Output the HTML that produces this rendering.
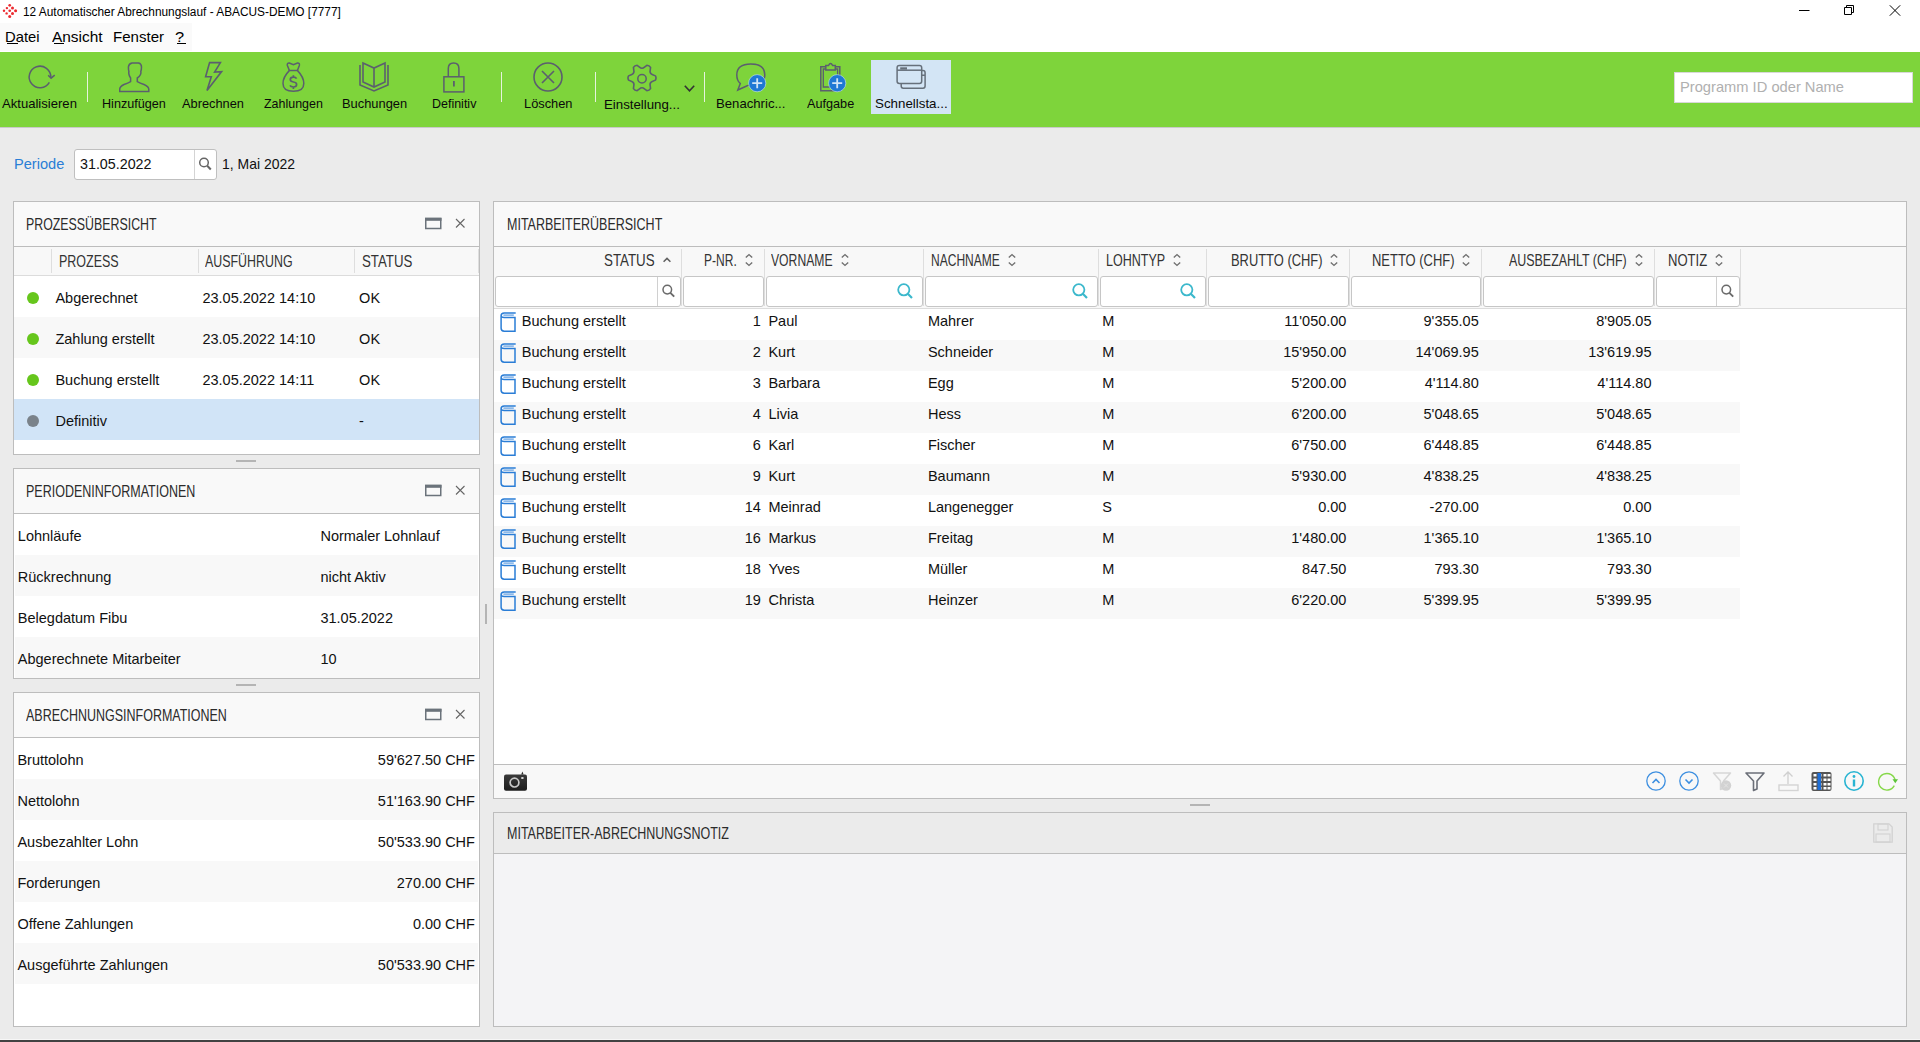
<!DOCTYPE html>
<html><head><meta charset="utf-8"><title>ABACUS</title>
<style>html,body{margin:0;padding:0;width:1920px;height:1042px;overflow:hidden;position:relative;font-family:'Liberation Sans', sans-serif;}</style>
</head><body>
<div style="position:absolute;left:0px;top:0px;width:1920px;height:1042px;background:#ebebeb;"></div>
<div style="position:absolute;left:0px;top:0px;width:1920px;height:23px;background:#ffffff;"></div>
<svg style="position:absolute;left:0px;top:0px;" width="20" height="22" viewBox="0 0 20 22"><circle cx="9.7" cy="5.3" r="1.35" fill="#ec2a30"/><circle cx="6.9" cy="8.1" r="1.2" fill="#ec2a30"/><circle cx="12.5" cy="8.1" r="1.5" fill="#ec2a30"/><circle cx="4" cy="10.75" r="1.2" fill="#ec2a30"/><circle cx="9.7" cy="10.75" r="1.35" fill="#ec2a30"/><circle cx="15.6" cy="10.75" r="1.5" fill="#ec2a30"/><circle cx="6.6" cy="13.4" r="1.2" fill="#ec2a30"/><circle cx="12.5" cy="13.4" r="1.5" fill="#ec2a30"/><circle cx="9.7" cy="16.4" r="1.5" fill="#ec2a30"/></svg>
<svg style="position:absolute;left:1790px;top:0px;" width="120" height="22" viewBox="0 0 120 22"><path d="M9 10.5h10.5" stroke="#000" stroke-width="1"/><path d="M54.5 7.5h7v7h-7z M56.5 7.5v-2h7v7h-2" fill="none" stroke="#000" stroke-width="1"/><path d="M99.8 5.3l10.4 10.4 M110.2 5.3l-10.4 10.4" stroke="#000" stroke-width="1"/></svg>
<div style="position:absolute;left:0px;top:23px;width:1920px;height:29px;background:#ffffff;"></div>
<div style="position:absolute;left:0px;top:23px;width:192px;height:28px;background:#fafafa;"></div>
<div style="position:absolute;left:6.5px;top:43px;width:11px;height:1px;background:#000;"></div>
<div style="position:absolute;left:53.5px;top:43px;width:10px;height:1px;background:#000;"></div>
<div style="position:absolute;left:114.5px;top:43px;width:0px;height:1px;background:#000;"></div>
<div style="position:absolute;left:176.5px;top:43px;width:9px;height:1px;background:#000;"></div>
<div style="position:absolute;left:0px;top:52px;width:1920px;height:75px;background:#7ed43b;"></div>
<div style="position:absolute;left:0px;top:127px;width:1920px;height:1px;background:#c9c9c9;"></div>
<div style="position:absolute;left:87px;top:72px;width:1px;height:30px;background:#e6f3dc;"></div>
<div style="position:absolute;left:501px;top:72px;width:1px;height:30px;background:#e6f3dc;"></div>
<div style="position:absolute;left:595px;top:72px;width:1px;height:30px;background:#e6f3dc;"></div>
<div style="position:absolute;left:704px;top:72px;width:1px;height:30px;background:#e6f3dc;"></div>
<div style="position:absolute;left:871px;top:60px;width:80px;height:54px;background:#d3e5f5;"></div>
<svg style="position:absolute;left:26px;top:61px;" width="32" height="32" viewBox="0 0 32 32"><path d="M23.35 21.4 A10.8 10.8 0 1 1 24.8 16.3" fill="none" stroke="#5b5f6e" stroke-width="1.5"/><path d="M22.2 14.2 L25.1 17.2 L28.7 14.2" fill="none" stroke="#5b5f6e" stroke-width="1.5"/></svg>
<svg style="position:absolute;left:119px;top:62px;" width="31" height="31" viewBox="0 0 31 31"><path d="M13 0.9 L19.6 0.9 Q22.5 1.6 22.5 5 Q22.5 8 21.8 9.5 Q22.2 11 21.5 12.5 Q20.5 14.8 18.3 16 L18.3 19.6 Q21 21 25 22.5 Q29.8 24.5 29.8 27.5 L29.8 29.4 L0.7 29.4 L0.7 27.5 Q0.7 24.5 5 22.5 Q9 21 11.6 19.6 L11.6 16 Q10.3 14 10 12.5 Q9.6 11 9.9 9.5 Q9.4 8 9.4 5 Q9.7 1.6 13 0.9 Z" fill="none" stroke="#5b5f6e" stroke-width="1.5"/></svg>
<svg style="position:absolute;left:203px;top:61px;" width="22" height="32" viewBox="0 0 22 32"><path d="M6.6 1.6 L17.4 1.6 L11.6 11 L18.6 10.6 L4 29.5 L8.3 15.8 L2.6 15.8 Z" fill="none" stroke="#5b5f6e" stroke-width="1.6" stroke-linejoin="miter"/></svg>
<svg style="position:absolute;left:281px;top:61px;" width="25" height="32" viewBox="0 0 25 32"><path d="M8.5 9.8 L6.3 4.2 Q6 1.8 8.3 2 L12.4 3.8 L16.5 2 Q18.8 1.8 18.4 4.2 L16.3 9.8" fill="none" stroke="#5b5f6e" stroke-width="1.5"/><path d="M8.3 9.6 L16.5 9.6 Q22.8 16 22.8 22.5 Q22.8 30.3 12.4 30.3 Q2 30.3 2 22.5 Q2 16 8.3 9.6 Z" fill="none" stroke="#5b5f6e" stroke-width="1.5"/><path d="M15.6 17.6 Q14.8 16.2 12.4 16.2 Q9.3 16.2 9.3 18.6 Q9.3 20.6 12.4 21 Q15.6 21.4 15.6 23.6 Q15.6 26 12.4 26 Q9.6 26 9 24.4 M12.4 14.3 L12.4 16.2 M12.4 26 L12.4 28" fill="none" stroke="#5b5f6e" stroke-width="1.7"/></svg>
<svg style="position:absolute;left:357px;top:61px;" width="34" height="31" viewBox="0 0 34 31"><path d="M3 4 L3 24 L17 30 L31 24 L31 4" fill="none" stroke="#5b5f6e" stroke-width="1.6"/><path d="M6 2 L17 7 L28 2 L28 21 L17 26 L6 21 Z M17 7 L17 26" fill="none" stroke="#5b5f6e" stroke-width="1.6"/></svg>
<svg style="position:absolute;left:442px;top:61px;" width="25" height="32" viewBox="0 0 25 32"><path d="M6.3 15.8 L6.3 7.6 Q6.3 2.1 11.6 2.1 Q16.9 2.1 16.9 7.6 L16.9 15.8" fill="none" stroke="#5b5f6e" stroke-width="1.5"/><rect x="1.9" y="15.8" width="20" height="15.1" fill="none" stroke="#5b5f6e" stroke-width="1.5"/><path d="M11.9 20 L11.9 25.4" stroke="#5b5f6e" stroke-width="1.8"/></svg>
<svg style="position:absolute;left:532px;top:61px;" width="32" height="32" viewBox="0 0 32 32"><circle cx="16" cy="16" r="14" fill="none" stroke="#5b5f6e" stroke-width="1.6"/><path d="M10 10 L22 22 M22 10 L10 22" stroke="#5b5f6e" stroke-width="1.6"/></svg>
<svg style="position:absolute;left:627px;top:62.7px;" width="30" height="30" viewBox="0 0 30 30"><path d="M28.43 12.87 Q29.60 15.00 28.43 17.13 L25.71 18.27 Q22.45 19.30 23.19 22.64 L23.56 25.57 Q22.30 27.64 19.87 27.70 L17.52 25.91 Q15.00 23.60 12.48 25.91 L10.13 27.70 Q7.70 27.64 6.44 25.57 L6.81 22.64 Q7.55 19.30 4.29 18.27 L1.57 17.13 Q0.40 15.00 1.57 12.87 L4.29 11.73 Q7.55 10.70 6.81 7.36 L6.44 4.43 Q7.70 2.36 10.13 2.30 L12.48 4.09 Q15.00 6.40 17.52 4.09 L19.87 2.30 Q22.30 2.36 23.56 4.43 L23.19 7.36 Q22.45 10.70 25.71 11.73 L28.43 12.87Z" fill="none" stroke="#5b5f6e" stroke-width="1.6" stroke-linejoin="round"/><circle cx="15" cy="15.7" r="4.2" fill="none" stroke="#5b5f6e" stroke-width="1.5"/></svg>
<svg style="position:absolute;left:683px;top:83.5px;" width="13" height="10" viewBox="0 0 13 10"><path d="M1.8 1.8 L6.5 6.8 L11.2 1.8" fill="none" stroke="#333" stroke-width="1.6"/></svg>
<svg style="position:absolute;left:735px;top:61px;" width="36" height="34" viewBox="0 0 36 34"><path d="M15.8 3 Q29.8 3 29.8 14 Q29.8 24 16 24 Q13 24 10.5 25.5 L2.8 29 L5.3 22.5 Q1.8 19.5 1.8 14 Q1.8 3 15.8 3 Z" fill="none" stroke="#5b5f6e" stroke-width="1.5"/><circle cx="22.2" cy="22.2" r="8.6" fill="#1f78d4" stroke="#e8f2ff" stroke-width="0.5"/><path d="M17.2 22.2 h10 M22.2 17.2 v10" stroke="#cfe3f7" stroke-width="1.8"/></svg>
<svg style="position:absolute;left:818px;top:60px;" width="30" height="34" viewBox="0 0 30 34"><path d="M7.3 6.8 L2.8 6.8 L2.8 30.8 L21.8 30.8 L21.8 6.8 L17.6 6.8" fill="none" stroke="#5b5f6e" stroke-width="1.5"/><path d="M7.3 9 L5.3 9 L5.3 27 L19.6 27 L19.6 9 L17.6 9" fill="none" stroke="#5b5f6e" stroke-width="1.3"/><path d="M7.8 10 L7.8 5.5 L10.5 5.5 Q12.6 1.5 14.6 5.5 L17.3 5.5 L17.3 10 Z" fill="none" stroke="#5b5f6e" stroke-width="1.5"/><circle cx="19.2" cy="23.2" r="8.6" fill="#1f78d4" stroke="#e8f2ff" stroke-width="0.5"/><path d="M14.2 23.2 h10 M19.2 18.2 v10" stroke="#cfe3f7" stroke-width="1.8"/></svg>
<svg style="position:absolute;left:895px;top:63px;" width="33" height="28" viewBox="0 0 33 28"><rect x="2.1" y="2.5" width="24.6" height="18" rx="2.2" fill="none" stroke="#66707b" stroke-width="1.5"/><path d="M2.1 7.2 L26.7 7.2" stroke="#66707b" stroke-width="1.5"/><rect x="5.2" y="4.3" width="6.8" height="2.3" fill="#66707b"/><path d="M26.7 7.6 L28 7.6 Q30.1 7.6 30.1 9.8 L30.1 23 Q30.1 25.2 28 25.2 L8.3 25.2 Q6.2 25.2 6.2 23 L6.2 20.5 M26.7 12.3 L30.1 12.3" fill="none" stroke="#66707b" stroke-width="1.5"/></svg>
<div style="position:absolute;left:1674px;top:72px;width:237px;height:29px;border:1px solid #d8d8d8;background:#ffffff;"></div>
<div style="position:absolute;left:74px;top:149px;width:141px;height:29px;border:1px solid #bfbfbf;background:#ffffff;border-radius:3px;"></div>
<div style="position:absolute;left:194px;top:150px;width:1px;height:29px;background:#d4d4d4;"></div>
<svg style="position:absolute;left:197px;top:155px;" width="17" height="18" viewBox="0 0 17 18"><circle cx="7" cy="7.5" r="4.3" fill="none" stroke="#666" stroke-width="1.5"/><path d="M10.2 10.7 L13.8 14.5" stroke="#666" stroke-width="2"/></svg>
<div style="position:absolute;left:13px;top:201px;width:465px;height:252px;border:1px solid #bdbdbd;background:#ffffff;"></div>
<div style="position:absolute;left:14px;top:202px;width:465px;height:44px;background:#f9f9f9;"></div>
<div style="position:absolute;left:14px;top:246px;width:465px;height:1px;background:#bdbdbd;"></div>
<svg style="position:absolute;left:425px;top:217px;" width="18" height="13" viewBox="0 0 18 13"><rect x="0.75" y="1.5" width="15" height="10" fill="none" stroke="#6b737b" stroke-width="1.5"/><rect x="0" y="0.8" width="16.5" height="3" fill="#6b737b"/></svg>
<svg style="position:absolute;left:455px;top:218px;" width="12" height="12" viewBox="0 0 12 12"><path d="M1 1 L9.5 9.5 M9.5 1 L1 9.5" stroke="#666" stroke-width="1.1"/></svg>
<div style="position:absolute;left:14px;top:247px;width:465px;height:28px;background:#f8f8f8;"></div>
<div style="position:absolute;left:14px;top:275px;width:465px;height:1px;background:#dcdcdc;"></div>
<div style="position:absolute;left:51px;top:249px;width:1px;height:24px;background:#dedede;"></div>
<div style="position:absolute;left:198px;top:249px;width:1px;height:24px;background:#dedede;"></div>
<div style="position:absolute;left:354px;top:249px;width:1px;height:24px;background:#dedede;"></div>
<div style="position:absolute;left:478px;top:249px;width:1px;height:24px;background:#dedede;"></div>
<svg style="position:absolute;left:26px;top:291px;" width="14" height="14" viewBox="0 0 14 14"><circle cx="7" cy="7" r="6" fill="#66c61c"/></svg>
<div style="position:absolute;left:14px;top:317px;width:465px;height:41px;background:#f8f8f8;"></div>
<svg style="position:absolute;left:26px;top:332px;" width="14" height="14" viewBox="0 0 14 14"><circle cx="7" cy="7" r="6" fill="#66c61c"/></svg>
<svg style="position:absolute;left:26px;top:373px;" width="14" height="14" viewBox="0 0 14 14"><circle cx="7" cy="7" r="6" fill="#66c61c"/></svg>
<div style="position:absolute;left:14px;top:399px;width:465px;height:41px;background:#d1e4f7;"></div>
<svg style="position:absolute;left:26px;top:414px;" width="14" height="14" viewBox="0 0 14 14"><circle cx="7" cy="7" r="6" fill="#7a828a"/></svg>
<div style="position:absolute;left:236px;top:460px;width:20px;height:2px;background:#b4b4b4;"></div>
<div style="position:absolute;left:13px;top:468px;width:465px;height:209px;border:1px solid #bdbdbd;background:#ffffff;"></div>
<div style="position:absolute;left:14px;top:469px;width:465px;height:44px;background:#f9f9f9;"></div>
<div style="position:absolute;left:14px;top:513px;width:465px;height:1px;background:#bdbdbd;"></div>
<svg style="position:absolute;left:425px;top:484px;" width="18" height="13" viewBox="0 0 18 13"><rect x="0.75" y="1.5" width="15" height="10" fill="none" stroke="#6b737b" stroke-width="1.5"/><rect x="0" y="0.8" width="16.5" height="3" fill="#6b737b"/></svg>
<svg style="position:absolute;left:455px;top:485px;" width="12" height="12" viewBox="0 0 12 12"><path d="M1 1 L9.5 9.5 M9.5 1 L1 9.5" stroke="#666" stroke-width="1.1"/></svg>
<div style="position:absolute;left:15px;top:555px;width:463px;height:41px;background:#f8f8f8;"></div>
<div style="position:absolute;left:15px;top:637px;width:463px;height:41px;background:#f8f8f8;"></div>
<div style="position:absolute;left:236px;top:684px;width:20px;height:2px;background:#b4b4b4;"></div>
<div style="position:absolute;left:485px;top:604px;width:2px;height:20px;background:#b4b4b4;"></div>
<div style="position:absolute;left:13px;top:692px;width:465px;height:333px;border:1px solid #bdbdbd;background:#ffffff;"></div>
<div style="position:absolute;left:14px;top:693px;width:465px;height:44px;background:#f9f9f9;"></div>
<div style="position:absolute;left:14px;top:737px;width:465px;height:1px;background:#bdbdbd;"></div>
<svg style="position:absolute;left:425px;top:708px;" width="18" height="13" viewBox="0 0 18 13"><rect x="0.75" y="1.5" width="15" height="10" fill="none" stroke="#6b737b" stroke-width="1.5"/><rect x="0" y="0.8" width="16.5" height="3" fill="#6b737b"/></svg>
<svg style="position:absolute;left:455px;top:709px;" width="12" height="12" viewBox="0 0 12 12"><path d="M1 1 L9.5 9.5 M9.5 1 L1 9.5" stroke="#666" stroke-width="1.1"/></svg>
<div style="position:absolute;left:15px;top:779px;width:463px;height:41px;background:#f8f8f8;"></div>
<div style="position:absolute;left:15px;top:861px;width:463px;height:41px;background:#f8f8f8;"></div>
<div style="position:absolute;left:15px;top:943px;width:463px;height:41px;background:#f8f8f8;"></div>
<div style="position:absolute;left:493px;top:201px;width:1412px;height:596px;border:1px solid #bdbdbd;background:#ffffff;"></div>
<div style="position:absolute;left:494px;top:202px;width:1412px;height:44px;background:#f9f9f9;"></div>
<div style="position:absolute;left:494px;top:246px;width:1412px;height:1px;background:#bdbdbd;"></div>
<div style="position:absolute;left:494px;top:247px;width:1412px;height:61px;background:#f8f8f8;"></div>
<div style="position:absolute;left:494px;top:308px;width:1412px;height:1px;background:#dcdcdc;"></div>
<div style="position:absolute;left:681px;top:249px;width:1px;height:57px;background:#dedede;"></div>
<div style="position:absolute;left:764px;top:249px;width:1px;height:57px;background:#dedede;"></div>
<div style="position:absolute;left:923px;top:249px;width:1px;height:57px;background:#dedede;"></div>
<div style="position:absolute;left:1098px;top:249px;width:1px;height:57px;background:#dedede;"></div>
<div style="position:absolute;left:1206px;top:249px;width:1px;height:57px;background:#dedede;"></div>
<div style="position:absolute;left:1349px;top:249px;width:1px;height:57px;background:#dedede;"></div>
<div style="position:absolute;left:1481px;top:249px;width:1px;height:57px;background:#dedede;"></div>
<div style="position:absolute;left:1654px;top:249px;width:1px;height:57px;background:#dedede;"></div>
<div style="position:absolute;left:1740px;top:249px;width:1px;height:57px;background:#dedede;"></div>
<div style="position:absolute;left:495px;top:276px;width:184px;height:29px;border:1px solid #c6c6c6;background:#ffffff;border-radius:3px;"></div>
<div style="position:absolute;left:683px;top:276px;width:79px;height:29px;border:1px solid #c6c6c6;background:#ffffff;border-radius:3px;"></div>
<div style="position:absolute;left:766px;top:276px;width:155px;height:29px;border:1px solid #c6c6c6;background:#ffffff;border-radius:3px;"></div>
<div style="position:absolute;left:925px;top:276px;width:171px;height:29px;border:1px solid #c6c6c6;background:#ffffff;border-radius:3px;"></div>
<div style="position:absolute;left:1100px;top:276px;width:104px;height:29px;border:1px solid #c6c6c6;background:#ffffff;border-radius:3px;"></div>
<div style="position:absolute;left:1208px;top:276px;width:139px;height:29px;border:1px solid #c6c6c6;background:#ffffff;border-radius:3px;"></div>
<div style="position:absolute;left:1351px;top:276px;width:128px;height:29px;border:1px solid #c6c6c6;background:#ffffff;border-radius:3px;"></div>
<div style="position:absolute;left:1483px;top:276px;width:169px;height:29px;border:1px solid #c6c6c6;background:#ffffff;border-radius:3px;"></div>
<div style="position:absolute;left:1656px;top:276px;width:82px;height:29px;border:1px solid #c6c6c6;background:#ffffff;border-radius:3px;"></div>
<div style="position:absolute;left:657px;top:277px;width:1px;height:29px;background:#d0d0d0;"></div>
<div style="position:absolute;left:1716px;top:277px;width:1px;height:29px;background:#d0d0d0;"></div>
<svg style="position:absolute;left:661px;top:283px;" width="16" height="16" viewBox="0 0 16 16"><circle cx="6.3" cy="6.6" r="4.3" fill="none" stroke="#6a6a6a" stroke-width="1.5"/><path d="M9.4 9.8 L13.2 13.6" stroke="#6a6a6a" stroke-width="1.9"/></svg>
<svg style="position:absolute;left:1720px;top:283px;" width="16" height="16" viewBox="0 0 16 16"><circle cx="6.3" cy="6.6" r="4.3" fill="none" stroke="#6a6a6a" stroke-width="1.5"/><path d="M9.4 9.8 L13.2 13.6" stroke="#6a6a6a" stroke-width="1.9"/></svg>
<svg style="position:absolute;left:897px;top:283px;" width="17" height="17" viewBox="0 0 17 17"><circle cx="6.8" cy="6.8" r="5.6" fill="none" stroke="#3bb8cc" stroke-width="1.8"/><path d="M10.8 10.8 L15 15" stroke="#3bb8cc" stroke-width="2.2"/></svg>
<svg style="position:absolute;left:1072px;top:283px;" width="17" height="17" viewBox="0 0 17 17"><circle cx="6.8" cy="6.8" r="5.6" fill="none" stroke="#3bb8cc" stroke-width="1.8"/><path d="M10.8 10.8 L15 15" stroke="#3bb8cc" stroke-width="2.2"/></svg>
<svg style="position:absolute;left:1180px;top:283px;" width="17" height="17" viewBox="0 0 17 17"><circle cx="6.8" cy="6.8" r="5.6" fill="none" stroke="#3bb8cc" stroke-width="1.8"/><path d="M10.8 10.8 L15 15" stroke="#3bb8cc" stroke-width="2.2"/></svg>
<svg style="position:absolute;left:662px;top:256px;" width="10" height="8" viewBox="0 0 10 8"><path d="M1.6 5.8 L5 2.4 L8.4 5.8" fill="none" stroke="#606060" stroke-width="1.5"/></svg>
<svg style="position:absolute;left:744px;top:253px;" width="10" height="14" viewBox="0 0 10 14"><path d="M1.8 4.6 L5 1.6 L8.2 4.6 M1.8 9.4 L5 12.4 L8.2 9.4" fill="none" stroke="#707070" stroke-width="1.4"/></svg>
<svg style="position:absolute;left:840.3px;top:253px;" width="10" height="14" viewBox="0 0 10 14"><path d="M1.8 4.6 L5 1.6 L8.2 4.6 M1.8 9.4 L5 12.4 L8.2 9.4" fill="none" stroke="#707070" stroke-width="1.4"/></svg>
<svg style="position:absolute;left:1007.4px;top:253px;" width="10" height="14" viewBox="0 0 10 14"><path d="M1.8 4.6 L5 1.6 L8.2 4.6 M1.8 9.4 L5 12.4 L8.2 9.4" fill="none" stroke="#707070" stroke-width="1.4"/></svg>
<svg style="position:absolute;left:1172px;top:253px;" width="10" height="14" viewBox="0 0 10 14"><path d="M1.8 4.6 L5 1.6 L8.2 4.6 M1.8 9.4 L5 12.4 L8.2 9.4" fill="none" stroke="#707070" stroke-width="1.4"/></svg>
<svg style="position:absolute;left:1329px;top:253px;" width="10" height="14" viewBox="0 0 10 14"><path d="M1.8 4.6 L5 1.6 L8.2 4.6 M1.8 9.4 L5 12.4 L8.2 9.4" fill="none" stroke="#707070" stroke-width="1.4"/></svg>
<svg style="position:absolute;left:1461px;top:253px;" width="10" height="14" viewBox="0 0 10 14"><path d="M1.8 4.6 L5 1.6 L8.2 4.6 M1.8 9.4 L5 12.4 L8.2 9.4" fill="none" stroke="#707070" stroke-width="1.4"/></svg>
<svg style="position:absolute;left:1634.3px;top:253px;" width="10" height="14" viewBox="0 0 10 14"><path d="M1.8 4.6 L5 1.6 L8.2 4.6 M1.8 9.4 L5 12.4 L8.2 9.4" fill="none" stroke="#707070" stroke-width="1.4"/></svg>
<svg style="position:absolute;left:1714px;top:253px;" width="10" height="14" viewBox="0 0 10 14"><path d="M1.8 4.6 L5 1.6 L8.2 4.6 M1.8 9.4 L5 12.4 L8.2 9.4" fill="none" stroke="#707070" stroke-width="1.4"/></svg>
<svg style="position:absolute;left:500px;top:312px;" width="16" height="20" viewBox="0 0 16 20"><path d="M15.7 0.9 L4.2 0.9 Q1.1 0.9 1.1 3.8 L1.1 16.3 Q1.1 19.2 4.2 19.2 L15 19.2 L15 5.4 L4.2 5.4 Q1.1 5.4 1.1 3.8" fill="none" stroke="#2a7dd6" stroke-width="1.5"/><path d="M3.4 3.1 L13.8 3.1" stroke="#6aa4e4" stroke-width="1.3"/></svg>
<div style="position:absolute;left:494px;top:340px;width:1246px;height:31px;background:#f8f8f8;"></div>
<svg style="position:absolute;left:500px;top:343px;" width="16" height="20" viewBox="0 0 16 20"><path d="M15.7 0.9 L4.2 0.9 Q1.1 0.9 1.1 3.8 L1.1 16.3 Q1.1 19.2 4.2 19.2 L15 19.2 L15 5.4 L4.2 5.4 Q1.1 5.4 1.1 3.8" fill="none" stroke="#2a7dd6" stroke-width="1.5"/><path d="M3.4 3.1 L13.8 3.1" stroke="#6aa4e4" stroke-width="1.3"/></svg>
<svg style="position:absolute;left:500px;top:374px;" width="16" height="20" viewBox="0 0 16 20"><path d="M15.7 0.9 L4.2 0.9 Q1.1 0.9 1.1 3.8 L1.1 16.3 Q1.1 19.2 4.2 19.2 L15 19.2 L15 5.4 L4.2 5.4 Q1.1 5.4 1.1 3.8" fill="none" stroke="#2a7dd6" stroke-width="1.5"/><path d="M3.4 3.1 L13.8 3.1" stroke="#6aa4e4" stroke-width="1.3"/></svg>
<div style="position:absolute;left:494px;top:402px;width:1246px;height:31px;background:#f8f8f8;"></div>
<svg style="position:absolute;left:500px;top:405px;" width="16" height="20" viewBox="0 0 16 20"><path d="M15.7 0.9 L4.2 0.9 Q1.1 0.9 1.1 3.8 L1.1 16.3 Q1.1 19.2 4.2 19.2 L15 19.2 L15 5.4 L4.2 5.4 Q1.1 5.4 1.1 3.8" fill="none" stroke="#2a7dd6" stroke-width="1.5"/><path d="M3.4 3.1 L13.8 3.1" stroke="#6aa4e4" stroke-width="1.3"/></svg>
<svg style="position:absolute;left:500px;top:436px;" width="16" height="20" viewBox="0 0 16 20"><path d="M15.7 0.9 L4.2 0.9 Q1.1 0.9 1.1 3.8 L1.1 16.3 Q1.1 19.2 4.2 19.2 L15 19.2 L15 5.4 L4.2 5.4 Q1.1 5.4 1.1 3.8" fill="none" stroke="#2a7dd6" stroke-width="1.5"/><path d="M3.4 3.1 L13.8 3.1" stroke="#6aa4e4" stroke-width="1.3"/></svg>
<div style="position:absolute;left:494px;top:464px;width:1246px;height:31px;background:#f8f8f8;"></div>
<svg style="position:absolute;left:500px;top:467px;" width="16" height="20" viewBox="0 0 16 20"><path d="M15.7 0.9 L4.2 0.9 Q1.1 0.9 1.1 3.8 L1.1 16.3 Q1.1 19.2 4.2 19.2 L15 19.2 L15 5.4 L4.2 5.4 Q1.1 5.4 1.1 3.8" fill="none" stroke="#2a7dd6" stroke-width="1.5"/><path d="M3.4 3.1 L13.8 3.1" stroke="#6aa4e4" stroke-width="1.3"/></svg>
<svg style="position:absolute;left:500px;top:498px;" width="16" height="20" viewBox="0 0 16 20"><path d="M15.7 0.9 L4.2 0.9 Q1.1 0.9 1.1 3.8 L1.1 16.3 Q1.1 19.2 4.2 19.2 L15 19.2 L15 5.4 L4.2 5.4 Q1.1 5.4 1.1 3.8" fill="none" stroke="#2a7dd6" stroke-width="1.5"/><path d="M3.4 3.1 L13.8 3.1" stroke="#6aa4e4" stroke-width="1.3"/></svg>
<div style="position:absolute;left:494px;top:526px;width:1246px;height:31px;background:#f8f8f8;"></div>
<svg style="position:absolute;left:500px;top:529px;" width="16" height="20" viewBox="0 0 16 20"><path d="M15.7 0.9 L4.2 0.9 Q1.1 0.9 1.1 3.8 L1.1 16.3 Q1.1 19.2 4.2 19.2 L15 19.2 L15 5.4 L4.2 5.4 Q1.1 5.4 1.1 3.8" fill="none" stroke="#2a7dd6" stroke-width="1.5"/><path d="M3.4 3.1 L13.8 3.1" stroke="#6aa4e4" stroke-width="1.3"/></svg>
<svg style="position:absolute;left:500px;top:560px;" width="16" height="20" viewBox="0 0 16 20"><path d="M15.7 0.9 L4.2 0.9 Q1.1 0.9 1.1 3.8 L1.1 16.3 Q1.1 19.2 4.2 19.2 L15 19.2 L15 5.4 L4.2 5.4 Q1.1 5.4 1.1 3.8" fill="none" stroke="#2a7dd6" stroke-width="1.5"/><path d="M3.4 3.1 L13.8 3.1" stroke="#6aa4e4" stroke-width="1.3"/></svg>
<div style="position:absolute;left:494px;top:588px;width:1246px;height:31px;background:#f8f8f8;"></div>
<svg style="position:absolute;left:500px;top:591px;" width="16" height="20" viewBox="0 0 16 20"><path d="M15.7 0.9 L4.2 0.9 Q1.1 0.9 1.1 3.8 L1.1 16.3 Q1.1 19.2 4.2 19.2 L15 19.2 L15 5.4 L4.2 5.4 Q1.1 5.4 1.1 3.8" fill="none" stroke="#2a7dd6" stroke-width="1.5"/><path d="M3.4 3.1 L13.8 3.1" stroke="#6aa4e4" stroke-width="1.3"/></svg>
<div style="position:absolute;left:494px;top:764px;width:1412px;height:1px;background:#bdbdbd;"></div>
<div style="position:absolute;left:494px;top:765px;width:1412px;height:33px;background:#f8f8f8;"></div>
<svg style="position:absolute;left:503px;top:770px;" width="26" height="23" viewBox="0 0 26 23"><defs><linearGradient id="cg" x1="0" y1="0" x2="0" y2="1"><stop offset="0" stop-color="#3a3a3a"/><stop offset="1" stop-color="#1c1c1c"/></linearGradient></defs><rect x="1" y="4.5" width="23" height="16.3" rx="2" fill="url(#cg)"/><path d="M18.2 4.6 L19.4 1.6 L20.6 4.6Z" fill="#2b2b2b"/><circle cx="11.5" cy="12.6" r="4.4" fill="none" stroke="#c8c8c8" stroke-width="1.7"/><ellipse cx="19.4" cy="8.1" rx="1.4" ry="1" fill="#ddd"/></svg>
<svg style="position:absolute;left:1645.5px;top:771px;" width="21" height="21" viewBox="0 0 21 21"><circle cx="10" cy="10" r="9.2" fill="none" stroke="#3d8fe0" stroke-width="1.3"/><path d="M6.5 12 L10 8.5 L13.5 12" fill="none" stroke="#3d8fe0" stroke-width="1.6"/></svg>
<svg style="position:absolute;left:1678.5px;top:771px;" width="21" height="21" viewBox="0 0 21 21"><circle cx="10" cy="10" r="9.2" fill="none" stroke="#3d8fe0" stroke-width="1.3"/><path d="M6.5 8.5 L10 12 L13.5 8.5" fill="none" stroke="#3d8fe0" stroke-width="1.6"/></svg>
<svg style="position:absolute;left:1712px;top:771px;" width="21" height="21" viewBox="0 0 21 21"><path d="M1.5 2 L18.5 2 L11.5 10 L11.5 17 L8.5 18.5 L8.5 10 Z" fill="none" stroke="#d6d6d6" stroke-width="1.5" stroke-linejoin="round"/><circle cx="14" cy="14.5" r="5.2" fill="#d2d2d2"/><path d="M12 12.5 L16 16.5 M16 12.5 L12 16.5" stroke="#e4e4e4" stroke-width="1"/></svg>
<svg style="position:absolute;left:1745px;top:771px;" width="21" height="21" viewBox="0 0 21 21"><path d="M1 2 L19 2 L12 10 L12 18 L8.5 19.5 L8.5 10 Z" fill="none" stroke="#6b6f78" stroke-width="1.6" stroke-linejoin="round"/></svg>
<svg style="position:absolute;left:1778px;top:771px;" width="21" height="21" viewBox="0 0 21 21"><path d="M10 1 L10 13 M5.5 5.5 L10 1 L14.5 5.5" fill="none" stroke="#cfcfcf" stroke-width="1.3"/><rect x="1" y="14" width="19" height="5.5" fill="none" stroke="#d4d4d4" stroke-width="1.4"/></svg>
<svg style="position:absolute;left:1810.5px;top:771px;" width="21" height="21" viewBox="0 0 21 21"><rect x="0.5" y="1" width="20" height="19" rx="2" fill="#555"/><rect x="2.5" y="3" width="3" height="2.5" fill="#fff"/><rect x="2.5" y="7.5" width="3" height="2.5" fill="#fff"/><rect x="2.5" y="12" width="3" height="2.5" fill="#fff"/><rect x="2.5" y="16" width="3" height="2.5" fill="#fff"/><rect x="7.5" y="3" width="3" height="2.5" fill="#fff"/><rect x="7.5" y="7.5" width="3" height="2.5" fill="#fff"/><rect x="7.5" y="12" width="3" height="2.5" fill="#fff"/><rect x="7.5" y="16" width="3" height="2.5" fill="#fff"/><rect x="12.5" y="3" width="3" height="2.5" fill="#fff"/><rect x="12.5" y="7.5" width="3" height="2.5" fill="#fff"/><rect x="12.5" y="12" width="3" height="2.5" fill="#fff"/><rect x="12.5" y="16" width="3" height="2.5" fill="#fff"/><rect x="16.5" y="3" width="3" height="2.5" fill="#fff"/><rect x="16.5" y="7.5" width="3" height="2.5" fill="#fff"/><rect x="16.5" y="12" width="3" height="2.5" fill="#fff"/><rect x="16.5" y="16" width="3" height="2.5" fill="#fff"/><rect x="6.5" y="2" width="3.5" height="17" fill="#1e6fd8"/></svg>
<svg style="position:absolute;left:1843.5px;top:771px;" width="21" height="21" viewBox="0 0 21 21"><circle cx="10" cy="10" r="9.2" fill="none" stroke="#28b4d2" stroke-width="1.6"/><circle cx="10" cy="5.5" r="1.4" fill="#28b4d2"/><path d="M10 8.5 L10 15.5" stroke="#28b4d2" stroke-width="2.4"/></svg>
<svg style="position:absolute;left:1877px;top:771px;" width="22" height="21" viewBox="0 0 22 21"><path d="M17.3 14.6 A8.3 8.3 0 1 1 18.2 10.2" fill="none" stroke="#86d84a" stroke-width="1.4"/><path d="M15.5 8.2 L18.3 12.3 L21 8.2 Z" fill="#5cc43a"/></svg>
<div style="position:absolute;left:1190px;top:804px;width:20px;height:2px;background:#b4b4b4;"></div>
<div style="position:absolute;left:493px;top:812px;width:1412px;height:213px;border:1px solid #bdbdbd;background:#f4f4f6;"></div>
<div style="position:absolute;left:494px;top:813px;width:1412px;height:40px;background:#ebebeb;"></div>
<div style="position:absolute;left:494px;top:853px;width:1412px;height:1px;background:#bdbdbd;"></div>
<svg style="position:absolute;left:1873px;top:823px;" width="20" height="20" viewBox="0 0 20 20"><path d="M0.8 0.8 L16 0.8 L19.2 4 L19.2 19.2 L0.8 19.2 Z" fill="none" stroke="#d2d2d2" stroke-width="1.3"/><rect x="5" y="1" width="10" height="6" fill="none" stroke="#d2d2d2" stroke-width="1.1"/><rect x="3" y="11" width="14" height="8" fill="none" stroke="#d2d2d2" stroke-width="1.1"/></svg>
<div style="position:absolute;left:0px;top:1039px;width:1920px;height:1px;background:#f7f7f7;"></div>
<div style="position:absolute;left:0px;top:1040px;width:1920px;height:2px;background:#424242;"></div>
<div style="position:absolute;left:22.52px;top:5.84px;font:normal 12px/12px 'Liberation Sans', sans-serif;color:#000;white-space:pre;transform:scaleX(0.9886);transform-origin:left top;">12 Automatischer Abrechnungslauf - ABACUS-DEMO [7777]</div>
<div style="position:absolute;left:5.42px;top:29.72px;font:normal 14.5px/14.5px 'Liberation Sans', sans-serif;color:#000;white-space:pre;transform:scaleX(1.0200);transform-origin:left top;">Datei</div>
<div style="position:absolute;left:52.42px;top:29.72px;font:normal 14.5px/14.5px 'Liberation Sans', sans-serif;color:#000;white-space:pre;transform:scaleX(1.0634);transform-origin:left top;">Ansicht</div>
<div style="position:absolute;left:113.42px;top:29.72px;font:normal 14.5px/14.5px 'Liberation Sans', sans-serif;color:#000;white-space:pre;transform:scaleX(1.0383);transform-origin:left top;">Fenster</div>
<div style="position:absolute;left:175.42px;top:29.72px;font:normal 14.5px/14.5px 'Liberation Sans', sans-serif;color:#000;white-space:pre;transform:scaleX(1.1326);transform-origin:left top;">?</div>
<div style="position:absolute;left:2.49px;top:98.16px;font:normal 12.8px/12.8px 'Liberation Sans', sans-serif;color:#0a0a0a;white-space:pre;transform:scaleX(1.0225);transform-origin:left top;">Aktualisieren</div>
<div style="position:absolute;left:101.99px;top:98.16px;font:normal 12.8px/12.8px 'Liberation Sans', sans-serif;color:#0a0a0a;white-space:pre;transform:scaleX(0.9851);transform-origin:left top;">Hinzufügen</div>
<div style="position:absolute;left:182.49px;top:98.16px;font:normal 12.8px/12.8px 'Liberation Sans', sans-serif;color:#0a0a0a;white-space:pre;transform:scaleX(0.9998);transform-origin:left top;">Abrechnen</div>
<div style="position:absolute;left:264.49px;top:98.16px;font:normal 12.8px/12.8px 'Liberation Sans', sans-serif;color:#0a0a0a;white-space:pre;transform:scaleX(0.9733);transform-origin:left top;">Zahlungen</div>
<div style="position:absolute;left:341.89px;top:98.16px;font:normal 12.8px/12.8px 'Liberation Sans', sans-serif;color:#0a0a0a;white-space:pre;transform:scaleX(1.0052);transform-origin:left top;">Buchungen</div>
<div style="position:absolute;left:431.99px;top:98.16px;font:normal 12.8px/12.8px 'Liberation Sans', sans-serif;color:#0a0a0a;white-space:pre;transform:scaleX(0.9749);transform-origin:left top;">Definitiv</div>
<div style="position:absolute;left:523.89px;top:98.16px;font:normal 12.8px/12.8px 'Liberation Sans', sans-serif;color:#0a0a0a;white-space:pre;transform:scaleX(1.0022);transform-origin:left top;">Löschen</div>
<div style="position:absolute;left:603.89px;top:99.16px;font:normal 12.8px/12.8px 'Liberation Sans', sans-serif;color:#0a0a0a;white-space:pre;transform:scaleX(1.0361);transform-origin:left top;">Einstellung...</div>
<div style="position:absolute;left:715.99px;top:98.16px;font:normal 12.8px/12.8px 'Liberation Sans', sans-serif;color:#0a0a0a;white-space:pre;transform:scaleX(1.0273);transform-origin:left top;">Benachric...</div>
<div style="position:absolute;left:807.49px;top:98.16px;font:normal 12.8px/12.8px 'Liberation Sans', sans-serif;color:#0a0a0a;white-space:pre;transform:scaleX(0.9895);transform-origin:left top;">Aufgabe</div>
<div style="position:absolute;left:874.79px;top:98.16px;font:normal 12.8px/12.8px 'Liberation Sans', sans-serif;color:#0a0a0a;white-space:pre;transform:scaleX(1.0418);transform-origin:left top;">Schnellsta...</div>
<div style="position:absolute;left:1679.92px;top:79.52px;font:normal 14.5px/14.5px 'Liberation Sans', sans-serif;color:#b0b0b0;white-space:pre;transform:scaleX(1.0127);transform-origin:left top;">Programm ID oder Name</div>
<div style="position:absolute;left:14.12px;top:157.22px;font:normal 14.5px/14.5px 'Liberation Sans', sans-serif;color:#2a7ed6;white-space:pre;transform:scaleX(1.0068);transform-origin:left top;">Periode</div>
<div style="position:absolute;left:79.92px;top:157.22px;font:normal 14.5px/14.5px 'Liberation Sans', sans-serif;color:#111;white-space:pre;transform:scaleX(0.9851);transform-origin:left top;">31.05.2022</div>
<div style="position:absolute;left:222.42px;top:157.22px;font:normal 14.5px/14.5px 'Liberation Sans', sans-serif;color:#111;white-space:pre;transform:scaleX(0.9630);transform-origin:left top;">1, Mai 2022</div>
<div style="position:absolute;left:26.37px;top:216.51px;font:normal 15.7px/15.7px 'Liberation Sans', sans-serif;color:#2b2b2b;white-space:pre;transform:scaleX(0.7883);transform-origin:left top;">PROZESSÜBERSICHT</div>
<div style="position:absolute;left:58.67px;top:253.71px;font:normal 15.7px/15.7px 'Liberation Sans', sans-serif;color:#333;white-space:pre;transform:scaleX(0.7960);transform-origin:left top;">PROZESS</div>
<div style="position:absolute;left:205.17px;top:253.71px;font:normal 15.7px/15.7px 'Liberation Sans', sans-serif;color:#333;white-space:pre;transform:scaleX(0.7911);transform-origin:left top;">AUSFÜHRUNG</div>
<div style="position:absolute;left:361.67px;top:253.71px;font:normal 15.7px/15.7px 'Liberation Sans', sans-serif;color:#333;white-space:pre;transform:scaleX(0.8450);transform-origin:left top;">STATUS</div>
<div style="position:absolute;left:55.42px;top:290.72px;font:normal 14.5px/14.5px 'Liberation Sans', sans-serif;color:#111;white-space:pre;">Abgerechnet</div>
<div style="position:absolute;left:202.42px;top:290.72px;font:normal 14.5px/14.5px 'Liberation Sans', sans-serif;color:#111;white-space:pre;">23.05.2022 14:10</div>
<div style="position:absolute;left:359.12px;top:290.72px;font:normal 14.5px/14.5px 'Liberation Sans', sans-serif;color:#111;white-space:pre;">OK</div>
<div style="position:absolute;left:55.42px;top:331.72px;font:normal 14.5px/14.5px 'Liberation Sans', sans-serif;color:#111;white-space:pre;">Zahlung erstellt</div>
<div style="position:absolute;left:202.42px;top:331.72px;font:normal 14.5px/14.5px 'Liberation Sans', sans-serif;color:#111;white-space:pre;">23.05.2022 14:10</div>
<div style="position:absolute;left:359.12px;top:331.72px;font:normal 14.5px/14.5px 'Liberation Sans', sans-serif;color:#111;white-space:pre;">OK</div>
<div style="position:absolute;left:55.42px;top:372.72px;font:normal 14.5px/14.5px 'Liberation Sans', sans-serif;color:#111;white-space:pre;">Buchung erstellt</div>
<div style="position:absolute;left:202.42px;top:372.72px;font:normal 14.5px/14.5px 'Liberation Sans', sans-serif;color:#111;white-space:pre;">23.05.2022 14:11</div>
<div style="position:absolute;left:359.12px;top:372.72px;font:normal 14.5px/14.5px 'Liberation Sans', sans-serif;color:#111;white-space:pre;">OK</div>
<div style="position:absolute;left:55.42px;top:413.72px;font:normal 14.5px/14.5px 'Liberation Sans', sans-serif;color:#111;white-space:pre;">Definitiv</div>
<div style="position:absolute;left:359.12px;top:413.72px;font:normal 14.5px/14.5px 'Liberation Sans', sans-serif;color:#111;white-space:pre;">-</div>
<div style="position:absolute;left:26.17px;top:483.51px;font:normal 15.7px/15.7px 'Liberation Sans', sans-serif;color:#2b2b2b;white-space:pre;transform:scaleX(0.7975);transform-origin:left top;">PERIODENINFORMATIONEN</div>
<div style="position:absolute;left:17.82px;top:528.72px;font:normal 14.5px/14.5px 'Liberation Sans', sans-serif;color:#111;white-space:pre;">Lohnläufe</div>
<div style="position:absolute;left:320.42px;top:528.72px;font:normal 14.5px/14.5px 'Liberation Sans', sans-serif;color:#111;white-space:pre;">Normaler Lohnlauf</div>
<div style="position:absolute;left:17.82px;top:569.72px;font:normal 14.5px/14.5px 'Liberation Sans', sans-serif;color:#111;white-space:pre;">Rückrechnung</div>
<div style="position:absolute;left:320.42px;top:569.72px;font:normal 14.5px/14.5px 'Liberation Sans', sans-serif;color:#111;white-space:pre;">nicht Aktiv</div>
<div style="position:absolute;left:17.82px;top:610.72px;font:normal 14.5px/14.5px 'Liberation Sans', sans-serif;color:#111;white-space:pre;">Belegdatum Fibu</div>
<div style="position:absolute;left:320.42px;top:610.72px;font:normal 14.5px/14.5px 'Liberation Sans', sans-serif;color:#111;white-space:pre;">31.05.2022</div>
<div style="position:absolute;left:17.82px;top:651.72px;font:normal 14.5px/14.5px 'Liberation Sans', sans-serif;color:#111;white-space:pre;">Abgerechnete Mitarbeiter</div>
<div style="position:absolute;left:320.42px;top:651.72px;font:normal 14.5px/14.5px 'Liberation Sans', sans-serif;color:#111;white-space:pre;">10</div>
<div style="position:absolute;left:25.77px;top:707.51px;font:normal 15.7px/15.7px 'Liberation Sans', sans-serif;color:#2b2b2b;white-space:pre;transform:scaleX(0.7956);transform-origin:left top;">ABRECHNUNGSINFORMATIONEN</div>
<div style="position:absolute;left:17.42px;top:752.72px;font:normal 14.5px/14.5px 'Liberation Sans', sans-serif;color:#111;white-space:pre;">Bruttolohn</div>
<div style="position:absolute;right:1445.07px;top:752.72px;font:normal 14.5px/14.5px 'Liberation Sans', sans-serif;color:#111;white-space:pre;">59'627.50 CHF</div>
<div style="position:absolute;left:17.42px;top:793.72px;font:normal 14.5px/14.5px 'Liberation Sans', sans-serif;color:#111;white-space:pre;">Nettolohn</div>
<div style="position:absolute;right:1445.07px;top:793.72px;font:normal 14.5px/14.5px 'Liberation Sans', sans-serif;color:#111;white-space:pre;">51'163.90 CHF</div>
<div style="position:absolute;left:17.42px;top:834.72px;font:normal 14.5px/14.5px 'Liberation Sans', sans-serif;color:#111;white-space:pre;">Ausbezahlter Lohn</div>
<div style="position:absolute;right:1445.07px;top:834.72px;font:normal 14.5px/14.5px 'Liberation Sans', sans-serif;color:#111;white-space:pre;">50'533.90 CHF</div>
<div style="position:absolute;left:17.42px;top:875.72px;font:normal 14.5px/14.5px 'Liberation Sans', sans-serif;color:#111;white-space:pre;">Forderungen</div>
<div style="position:absolute;right:1445.07px;top:875.72px;font:normal 14.5px/14.5px 'Liberation Sans', sans-serif;color:#111;white-space:pre;">270.00 CHF</div>
<div style="position:absolute;left:17.42px;top:916.72px;font:normal 14.5px/14.5px 'Liberation Sans', sans-serif;color:#111;white-space:pre;">Offene Zahlungen</div>
<div style="position:absolute;right:1445.07px;top:916.72px;font:normal 14.5px/14.5px 'Liberation Sans', sans-serif;color:#111;white-space:pre;">0.00 CHF</div>
<div style="position:absolute;left:17.42px;top:957.72px;font:normal 14.5px/14.5px 'Liberation Sans', sans-serif;color:#111;white-space:pre;">Ausgeführte Zahlungen</div>
<div style="position:absolute;right:1445.07px;top:957.72px;font:normal 14.5px/14.5px 'Liberation Sans', sans-serif;color:#111;white-space:pre;">50'533.90 CHF</div>
<div style="position:absolute;left:506.67px;top:216.51px;font:normal 15.7px/15.7px 'Liberation Sans', sans-serif;color:#2b2b2b;white-space:pre;transform:scaleX(0.7965);transform-origin:left top;">MITARBEITERÜBERSICHT</div>
<div style="position:absolute;left:603.67px;top:253.21px;font:normal 15.7px/15.7px 'Liberation Sans', sans-serif;color:#333;white-space:pre;transform:scaleX(0.8501);transform-origin:left top;">STATUS</div>
<div style="position:absolute;left:703.87px;top:253.21px;font:normal 15.7px/15.7px 'Liberation Sans', sans-serif;color:#333;white-space:pre;transform:scaleX(0.7665);transform-origin:left top;">P-NR.</div>
<div style="position:absolute;left:771.17px;top:253.21px;font:normal 15.7px/15.7px 'Liberation Sans', sans-serif;color:#333;white-space:pre;transform:scaleX(0.7759);transform-origin:left top;">VORNAME</div>
<div style="position:absolute;left:930.77px;top:253.21px;font:normal 15.7px/15.7px 'Liberation Sans', sans-serif;color:#333;white-space:pre;transform:scaleX(0.7668);transform-origin:left top;">NACHNAME</div>
<div style="position:absolute;left:1105.77px;top:253.21px;font:normal 15.7px/15.7px 'Liberation Sans', sans-serif;color:#333;white-space:pre;transform:scaleX(0.7985);transform-origin:left top;">LOHNTYP</div>
<div style="position:absolute;left:1230.62px;top:253.21px;font:normal 15.7px/15.7px 'Liberation Sans', sans-serif;color:#333;white-space:pre;transform:scaleX(0.8224);transform-origin:left top;">BRUTTO (CHF)</div>
<div style="position:absolute;left:1371.67px;top:253.21px;font:normal 15.7px/15.7px 'Liberation Sans', sans-serif;color:#333;white-space:pre;transform:scaleX(0.8256);transform-origin:left top;">NETTO (CHF)</div>
<div style="position:absolute;left:1509.17px;top:253.21px;font:normal 15.7px/15.7px 'Liberation Sans', sans-serif;color:#333;white-space:pre;transform:scaleX(0.7926);transform-origin:left top;">AUSBEZAHLT (CHF)</div>
<div style="position:absolute;left:1667.77px;top:253.21px;font:normal 15.7px/15.7px 'Liberation Sans', sans-serif;color:#333;white-space:pre;transform:scaleX(0.8333);transform-origin:left top;">NOTIZ</div>
<div style="position:absolute;left:521.72px;top:313.72px;font:normal 14.5px/14.5px 'Liberation Sans', sans-serif;color:#111;white-space:pre;">Buchung erstellt</div>
<div style="position:absolute;right:1159.07px;top:313.72px;font:normal 14.5px/14.5px 'Liberation Sans', sans-serif;color:#111;white-space:pre;">1</div>
<div style="position:absolute;left:768.42px;top:313.72px;font:normal 14.5px/14.5px 'Liberation Sans', sans-serif;color:#111;white-space:pre;">Paul</div>
<div style="position:absolute;left:927.92px;top:313.72px;font:normal 14.5px/14.5px 'Liberation Sans', sans-serif;color:#111;white-space:pre;">Mahrer</div>
<div style="position:absolute;left:1102.22px;top:313.72px;font:normal 14.5px/14.5px 'Liberation Sans', sans-serif;color:#111;white-space:pre;">M</div>
<div style="position:absolute;right:573.57px;top:313.72px;font:normal 14.5px/14.5px 'Liberation Sans', sans-serif;color:#111;white-space:pre;">11'050.00</div>
<div style="position:absolute;right:441.27px;top:313.72px;font:normal 14.5px/14.5px 'Liberation Sans', sans-serif;color:#111;white-space:pre;">9'355.05</div>
<div style="position:absolute;right:268.56px;top:313.72px;font:normal 14.5px/14.5px 'Liberation Sans', sans-serif;color:#111;white-space:pre;">8'905.05</div>
<div style="position:absolute;left:521.72px;top:344.72px;font:normal 14.5px/14.5px 'Liberation Sans', sans-serif;color:#111;white-space:pre;">Buchung erstellt</div>
<div style="position:absolute;right:1159.07px;top:344.72px;font:normal 14.5px/14.5px 'Liberation Sans', sans-serif;color:#111;white-space:pre;">2</div>
<div style="position:absolute;left:768.42px;top:344.72px;font:normal 14.5px/14.5px 'Liberation Sans', sans-serif;color:#111;white-space:pre;">Kurt</div>
<div style="position:absolute;left:927.92px;top:344.72px;font:normal 14.5px/14.5px 'Liberation Sans', sans-serif;color:#111;white-space:pre;">Schneider</div>
<div style="position:absolute;left:1102.22px;top:344.72px;font:normal 14.5px/14.5px 'Liberation Sans', sans-serif;color:#111;white-space:pre;">M</div>
<div style="position:absolute;right:573.57px;top:344.72px;font:normal 14.5px/14.5px 'Liberation Sans', sans-serif;color:#111;white-space:pre;">15'950.00</div>
<div style="position:absolute;right:441.27px;top:344.72px;font:normal 14.5px/14.5px 'Liberation Sans', sans-serif;color:#111;white-space:pre;">14'069.95</div>
<div style="position:absolute;right:268.56px;top:344.72px;font:normal 14.5px/14.5px 'Liberation Sans', sans-serif;color:#111;white-space:pre;">13'619.95</div>
<div style="position:absolute;left:521.72px;top:375.72px;font:normal 14.5px/14.5px 'Liberation Sans', sans-serif;color:#111;white-space:pre;">Buchung erstellt</div>
<div style="position:absolute;right:1159.07px;top:375.72px;font:normal 14.5px/14.5px 'Liberation Sans', sans-serif;color:#111;white-space:pre;">3</div>
<div style="position:absolute;left:768.42px;top:375.72px;font:normal 14.5px/14.5px 'Liberation Sans', sans-serif;color:#111;white-space:pre;">Barbara</div>
<div style="position:absolute;left:927.92px;top:375.72px;font:normal 14.5px/14.5px 'Liberation Sans', sans-serif;color:#111;white-space:pre;">Egg</div>
<div style="position:absolute;left:1102.22px;top:375.72px;font:normal 14.5px/14.5px 'Liberation Sans', sans-serif;color:#111;white-space:pre;">M</div>
<div style="position:absolute;right:573.57px;top:375.72px;font:normal 14.5px/14.5px 'Liberation Sans', sans-serif;color:#111;white-space:pre;">5'200.00</div>
<div style="position:absolute;right:441.27px;top:375.72px;font:normal 14.5px/14.5px 'Liberation Sans', sans-serif;color:#111;white-space:pre;">4'114.80</div>
<div style="position:absolute;right:268.56px;top:375.72px;font:normal 14.5px/14.5px 'Liberation Sans', sans-serif;color:#111;white-space:pre;">4'114.80</div>
<div style="position:absolute;left:521.72px;top:406.72px;font:normal 14.5px/14.5px 'Liberation Sans', sans-serif;color:#111;white-space:pre;">Buchung erstellt</div>
<div style="position:absolute;right:1159.07px;top:406.72px;font:normal 14.5px/14.5px 'Liberation Sans', sans-serif;color:#111;white-space:pre;">4</div>
<div style="position:absolute;left:768.42px;top:406.72px;font:normal 14.5px/14.5px 'Liberation Sans', sans-serif;color:#111;white-space:pre;">Livia</div>
<div style="position:absolute;left:927.92px;top:406.72px;font:normal 14.5px/14.5px 'Liberation Sans', sans-serif;color:#111;white-space:pre;">Hess</div>
<div style="position:absolute;left:1102.22px;top:406.72px;font:normal 14.5px/14.5px 'Liberation Sans', sans-serif;color:#111;white-space:pre;">M</div>
<div style="position:absolute;right:573.57px;top:406.72px;font:normal 14.5px/14.5px 'Liberation Sans', sans-serif;color:#111;white-space:pre;">6'200.00</div>
<div style="position:absolute;right:441.27px;top:406.72px;font:normal 14.5px/14.5px 'Liberation Sans', sans-serif;color:#111;white-space:pre;">5'048.65</div>
<div style="position:absolute;right:268.56px;top:406.72px;font:normal 14.5px/14.5px 'Liberation Sans', sans-serif;color:#111;white-space:pre;">5'048.65</div>
<div style="position:absolute;left:521.72px;top:437.72px;font:normal 14.5px/14.5px 'Liberation Sans', sans-serif;color:#111;white-space:pre;">Buchung erstellt</div>
<div style="position:absolute;right:1159.07px;top:437.72px;font:normal 14.5px/14.5px 'Liberation Sans', sans-serif;color:#111;white-space:pre;">6</div>
<div style="position:absolute;left:768.42px;top:437.72px;font:normal 14.5px/14.5px 'Liberation Sans', sans-serif;color:#111;white-space:pre;">Karl</div>
<div style="position:absolute;left:927.92px;top:437.72px;font:normal 14.5px/14.5px 'Liberation Sans', sans-serif;color:#111;white-space:pre;">Fischer</div>
<div style="position:absolute;left:1102.22px;top:437.72px;font:normal 14.5px/14.5px 'Liberation Sans', sans-serif;color:#111;white-space:pre;">M</div>
<div style="position:absolute;right:573.57px;top:437.72px;font:normal 14.5px/14.5px 'Liberation Sans', sans-serif;color:#111;white-space:pre;">6'750.00</div>
<div style="position:absolute;right:441.27px;top:437.72px;font:normal 14.5px/14.5px 'Liberation Sans', sans-serif;color:#111;white-space:pre;">6'448.85</div>
<div style="position:absolute;right:268.56px;top:437.72px;font:normal 14.5px/14.5px 'Liberation Sans', sans-serif;color:#111;white-space:pre;">6'448.85</div>
<div style="position:absolute;left:521.72px;top:468.72px;font:normal 14.5px/14.5px 'Liberation Sans', sans-serif;color:#111;white-space:pre;">Buchung erstellt</div>
<div style="position:absolute;right:1159.07px;top:468.72px;font:normal 14.5px/14.5px 'Liberation Sans', sans-serif;color:#111;white-space:pre;">9</div>
<div style="position:absolute;left:768.42px;top:468.72px;font:normal 14.5px/14.5px 'Liberation Sans', sans-serif;color:#111;white-space:pre;">Kurt</div>
<div style="position:absolute;left:927.92px;top:468.72px;font:normal 14.5px/14.5px 'Liberation Sans', sans-serif;color:#111;white-space:pre;">Baumann</div>
<div style="position:absolute;left:1102.22px;top:468.72px;font:normal 14.5px/14.5px 'Liberation Sans', sans-serif;color:#111;white-space:pre;">M</div>
<div style="position:absolute;right:573.57px;top:468.72px;font:normal 14.5px/14.5px 'Liberation Sans', sans-serif;color:#111;white-space:pre;">5'930.00</div>
<div style="position:absolute;right:441.27px;top:468.72px;font:normal 14.5px/14.5px 'Liberation Sans', sans-serif;color:#111;white-space:pre;">4'838.25</div>
<div style="position:absolute;right:268.56px;top:468.72px;font:normal 14.5px/14.5px 'Liberation Sans', sans-serif;color:#111;white-space:pre;">4'838.25</div>
<div style="position:absolute;left:521.72px;top:499.72px;font:normal 14.5px/14.5px 'Liberation Sans', sans-serif;color:#111;white-space:pre;">Buchung erstellt</div>
<div style="position:absolute;right:1159.07px;top:499.72px;font:normal 14.5px/14.5px 'Liberation Sans', sans-serif;color:#111;white-space:pre;">14</div>
<div style="position:absolute;left:768.42px;top:499.72px;font:normal 14.5px/14.5px 'Liberation Sans', sans-serif;color:#111;white-space:pre;">Meinrad</div>
<div style="position:absolute;left:927.92px;top:499.72px;font:normal 14.5px/14.5px 'Liberation Sans', sans-serif;color:#111;white-space:pre;">Langenegger</div>
<div style="position:absolute;left:1102.22px;top:499.72px;font:normal 14.5px/14.5px 'Liberation Sans', sans-serif;color:#111;white-space:pre;">S</div>
<div style="position:absolute;right:573.57px;top:499.72px;font:normal 14.5px/14.5px 'Liberation Sans', sans-serif;color:#111;white-space:pre;">0.00</div>
<div style="position:absolute;right:441.27px;top:499.72px;font:normal 14.5px/14.5px 'Liberation Sans', sans-serif;color:#111;white-space:pre;">-270.00</div>
<div style="position:absolute;right:268.56px;top:499.72px;font:normal 14.5px/14.5px 'Liberation Sans', sans-serif;color:#111;white-space:pre;">0.00</div>
<div style="position:absolute;left:521.72px;top:530.72px;font:normal 14.5px/14.5px 'Liberation Sans', sans-serif;color:#111;white-space:pre;">Buchung erstellt</div>
<div style="position:absolute;right:1159.07px;top:530.72px;font:normal 14.5px/14.5px 'Liberation Sans', sans-serif;color:#111;white-space:pre;">16</div>
<div style="position:absolute;left:768.42px;top:530.72px;font:normal 14.5px/14.5px 'Liberation Sans', sans-serif;color:#111;white-space:pre;">Markus</div>
<div style="position:absolute;left:927.92px;top:530.72px;font:normal 14.5px/14.5px 'Liberation Sans', sans-serif;color:#111;white-space:pre;">Freitag</div>
<div style="position:absolute;left:1102.22px;top:530.72px;font:normal 14.5px/14.5px 'Liberation Sans', sans-serif;color:#111;white-space:pre;">M</div>
<div style="position:absolute;right:573.57px;top:530.72px;font:normal 14.5px/14.5px 'Liberation Sans', sans-serif;color:#111;white-space:pre;">1'480.00</div>
<div style="position:absolute;right:441.27px;top:530.72px;font:normal 14.5px/14.5px 'Liberation Sans', sans-serif;color:#111;white-space:pre;">1'365.10</div>
<div style="position:absolute;right:268.56px;top:530.72px;font:normal 14.5px/14.5px 'Liberation Sans', sans-serif;color:#111;white-space:pre;">1'365.10</div>
<div style="position:absolute;left:521.72px;top:561.72px;font:normal 14.5px/14.5px 'Liberation Sans', sans-serif;color:#111;white-space:pre;">Buchung erstellt</div>
<div style="position:absolute;right:1159.07px;top:561.72px;font:normal 14.5px/14.5px 'Liberation Sans', sans-serif;color:#111;white-space:pre;">18</div>
<div style="position:absolute;left:768.42px;top:561.72px;font:normal 14.5px/14.5px 'Liberation Sans', sans-serif;color:#111;white-space:pre;">Yves</div>
<div style="position:absolute;left:927.92px;top:561.72px;font:normal 14.5px/14.5px 'Liberation Sans', sans-serif;color:#111;white-space:pre;">Müller</div>
<div style="position:absolute;left:1102.22px;top:561.72px;font:normal 14.5px/14.5px 'Liberation Sans', sans-serif;color:#111;white-space:pre;">M</div>
<div style="position:absolute;right:573.57px;top:561.72px;font:normal 14.5px/14.5px 'Liberation Sans', sans-serif;color:#111;white-space:pre;">847.50</div>
<div style="position:absolute;right:441.27px;top:561.72px;font:normal 14.5px/14.5px 'Liberation Sans', sans-serif;color:#111;white-space:pre;">793.30</div>
<div style="position:absolute;right:268.56px;top:561.72px;font:normal 14.5px/14.5px 'Liberation Sans', sans-serif;color:#111;white-space:pre;">793.30</div>
<div style="position:absolute;left:521.72px;top:592.72px;font:normal 14.5px/14.5px 'Liberation Sans', sans-serif;color:#111;white-space:pre;">Buchung erstellt</div>
<div style="position:absolute;right:1159.07px;top:592.72px;font:normal 14.5px/14.5px 'Liberation Sans', sans-serif;color:#111;white-space:pre;">19</div>
<div style="position:absolute;left:768.42px;top:592.72px;font:normal 14.5px/14.5px 'Liberation Sans', sans-serif;color:#111;white-space:pre;">Christa</div>
<div style="position:absolute;left:927.92px;top:592.72px;font:normal 14.5px/14.5px 'Liberation Sans', sans-serif;color:#111;white-space:pre;">Heinzer</div>
<div style="position:absolute;left:1102.22px;top:592.72px;font:normal 14.5px/14.5px 'Liberation Sans', sans-serif;color:#111;white-space:pre;">M</div>
<div style="position:absolute;right:573.57px;top:592.72px;font:normal 14.5px/14.5px 'Liberation Sans', sans-serif;color:#111;white-space:pre;">6'220.00</div>
<div style="position:absolute;right:441.27px;top:592.72px;font:normal 14.5px/14.5px 'Liberation Sans', sans-serif;color:#111;white-space:pre;">5'399.95</div>
<div style="position:absolute;right:268.56px;top:592.72px;font:normal 14.5px/14.5px 'Liberation Sans', sans-serif;color:#111;white-space:pre;">5'399.95</div>
<div style="position:absolute;left:506.77px;top:825.51px;font:normal 15.7px/15.7px 'Liberation Sans', sans-serif;color:#2b2b2b;white-space:pre;transform:scaleX(0.7964);transform-origin:left top;">MITARBEITER-ABRECHNUNGSNOTIZ</div>
</body></html>
